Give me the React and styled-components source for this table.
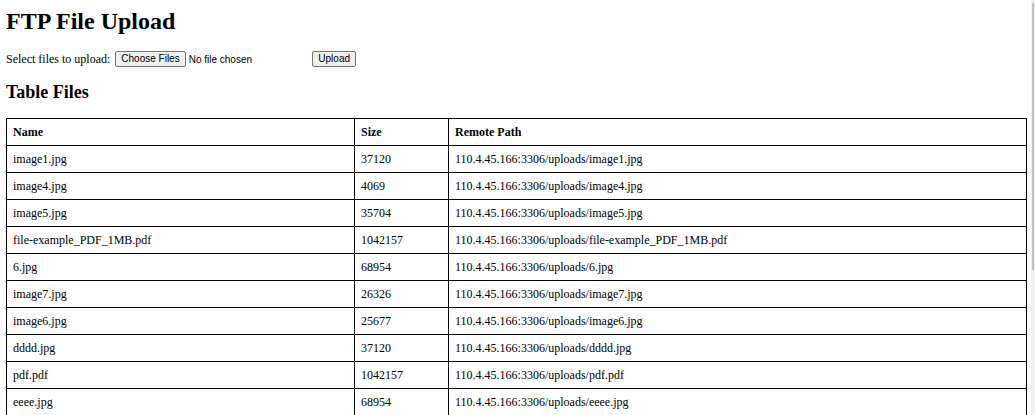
import React, { useState } from 'react'
import styled, { createGlobalStyle } from 'styled-components'

const REMOTE = '110.4.45.166:3306/uploads/'

const files = [
    { name: 'image1.jpg', size: 37120 },
    { name: 'image4.jpg', size: 4069 },
    { name: 'image5.jpg', size: 35704 },
    { name: 'file-example_PDF_1MB.pdf', size: 1042157 },
    { name: '6.jpg', size: 68954 },
    { name: 'image7.jpg', size: 26326 },
    { name: 'image6.jpg', size: 25677 },
    { name: 'dddd.jpg', size: 37120 },
    { name: 'pdf.pdf', size: 1042157 },
    { name: 'eeee.jpg', size: 68954 },
]

function App() {
    const [chosen, setChosen] = useState([])

    const pick = (e) => {
        setChosen(Array.from(e.target.files || []))
    }

    return (
        <Page>
            <GlobalStyle />
            <Title>FTP File Upload</Title>
            <UploadForm onSubmit={(e) => e.preventDefault()}>
                <span>Select files to upload:</span>
                <FilePicker>
                    <HiddenInput type="file" multiple onChange={pick} />
                    <PickButton>Choose Files</PickButton>
                    <PickStatus>
                        {chosen.length === 0 ? 'No file chosen' : chosen.length === 1 ? chosen[0].name : `${chosen.length} files`}
                    </PickStatus>
                </FilePicker>
                <UploadButton type="submit">Upload</UploadButton>
            </UploadForm>
            <SubTitle>Table Files</SubTitle>
            <FileTable>
                <colgroup>
                    <col style={{ width: 348 }} />
                    <col style={{ width: 94 }} />
                    <col />
                </colgroup>
                <thead>
                    <tr>
                        <HeadCell>Name</HeadCell>
                        <HeadCell>Size</HeadCell>
                        <HeadCell>Remote Path</HeadCell>
                    </tr>
                </thead>
                <tbody>
                    {files.map((f, i) => (
                        <tr key={i}>
                            <Cell>{f.name}</Cell>
                            <Cell>{f.size}</Cell>
                            <Cell>{REMOTE + f.name}</Cell>
                        </tr>
                    ))}
                </tbody>
            </FileTable>
            <ScrollTrack>
                <ScrollThumb />
            </ScrollTrack>
        </Page>
    )
}

const GlobalStyle = createGlobalStyle`
    html, body{
        margin: 0;
        padding: 0;
        overflow: hidden;
        background: #fff;
    }
    body{
        font-family: "Liberation Serif", "Times New Roman", serif;
        font-size: 12px;
        color: #000;
    }
`
const Page = styled.div`
    padding: 7px 0 0 6px;
`
const Title = styled.h1`
    margin: 0;
    font-size: 24px;
    line-height: 28px;
    font-weight: bold;
`
const UploadForm = styled.form`
    display: flex;
    align-items: center;
    height: 18px;
    margin-top: 15px;
    white-space: nowrap;
`
const FilePicker = styled.label`
    display: inline-flex;
    align-items: center;
    width: 194px;
    margin-left: 5px;
    cursor: pointer;
`
const HiddenInput = styled.input`
    display: none;
`
const buttonLook = `
    font-family: "Liberation Sans", Arial, sans-serif;
    font-size: 10px;
    line-height: 12px;
    color: #000;
    background: #efefef;
    border: 1px solid #767676;
    border-radius: 2px;
    padding: 1px 5px;
    height: 16px;
    box-sizing: border-box;
`
const PickButton = styled.span`
    ${buttonLook}
    display: inline-block;
`
const PickStatus = styled.span`
    font-family: "Liberation Sans", Arial, sans-serif;
    font-size: 10px;
    margin-left: 3px;
`
const UploadButton = styled.button`
    ${buttonLook}
    margin-left: 3px;
    cursor: pointer;
`
const SubTitle = styled.h2`
    margin: 14px 0 0;
    font-size: 18px;
    line-height: 21px;
    font-weight: bold;
`
const FileTable = styled.table`
    margin-top: 15px;
    width: 1021px;
    table-layout: fixed;
    border-collapse: collapse;
    border: 1px solid #000;
`
const Cell = styled.td`
    border: 1px solid #000;
    height: 27px;
    padding: 0 6px;
    line-height: 14px;
    text-align: left;
    vertical-align: middle;
    box-sizing: border-box;
`
const HeadCell = styled(Cell).attrs({ as: 'th' })`
    font-weight: bold;
`
const ScrollTrack = styled.div`
    position: fixed;
    top: 0;
    right: 0;
    width: 4px;
    height: 100vh;
    background: #f1f1f1;
    padding-top: 3px;
    box-sizing: border-box;
`
const ScrollThumb = styled.div`
    width: 2px;
    margin-left: 1px;
    height: 267px;
    background: #c1c1c1;
`

export default App
